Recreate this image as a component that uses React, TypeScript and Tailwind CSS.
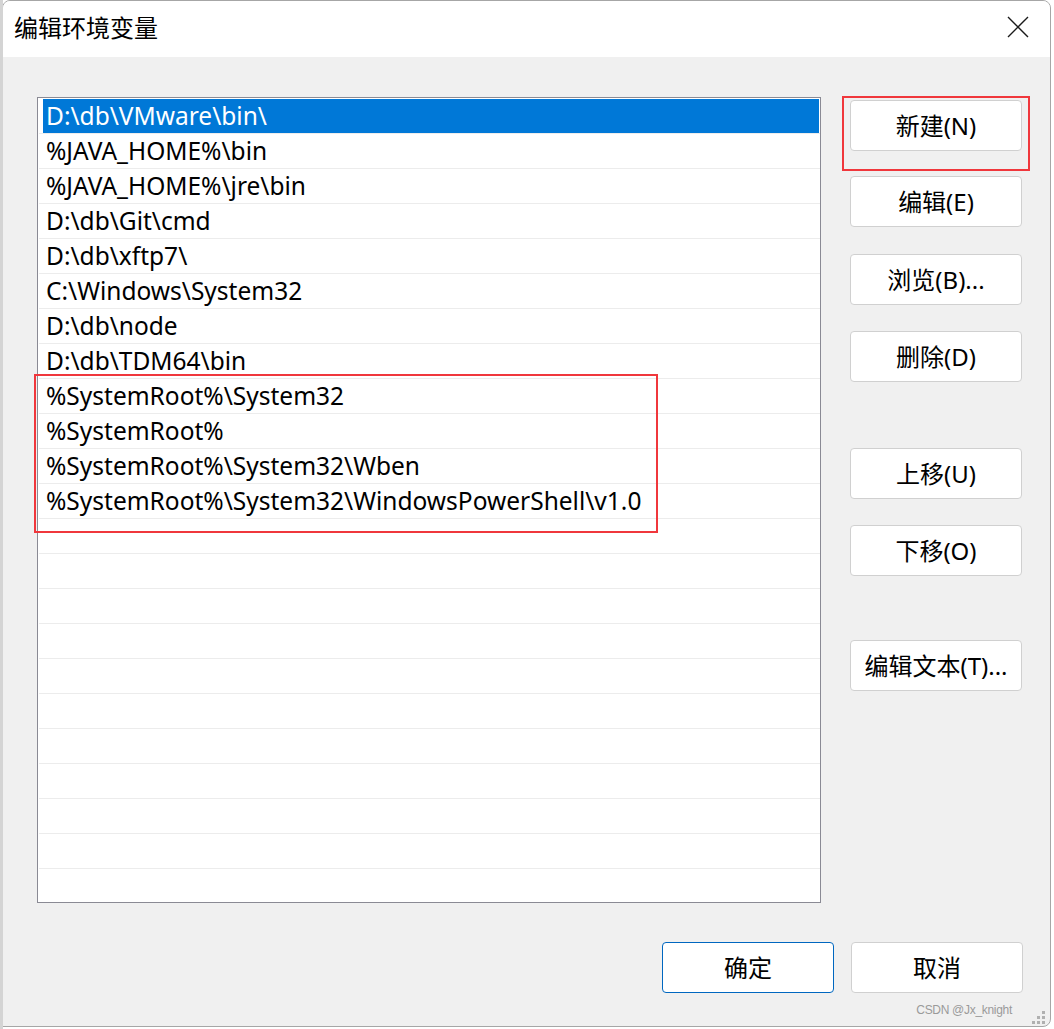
import React from "react";

const rows = [
  "D:\\db\\VMware\\bin\\",
  "%JAVA_HOME%\\bin",
  "%JAVA_HOME%\\jre\\bin",
  "D:\\db\\Git\\cmd",
  "D:\\db\\xftp7\\",
  "C:\\Windows\\System32",
  "D:\\db\\node",
  "D:\\db\\TDM64\\bin",
  "%SystemRoot%\\System32",
  "%SystemRoot%",
  "%SystemRoot%\\System32\\Wben",
  "%SystemRoot%\\System32\\WindowsPowerShell\\v1.0",
];

const font = { fontFamily: '"Noto Sans", "Noto Sans CJK SC", sans-serif' };

function DialogButton({
  label,
  primary,
  className = "",
}: {
  label: string;
  primary?: boolean;
  className?: string;
}) {
  return (
    <div
      className={
        "w-[172px] h-[51px] flex items-center justify-center bg-white rounded-[4px] border text-[24px] text-black " +
        (primary ? "border-[#0067c0] " : "border-[#d0d0d0] ") +
        className
      }
    >
      {label}
    </div>
  );
}

function PathList() {
  const all = [...rows, ...Array(11).fill("")];
  return (
    <div className="w-[784px] h-[806px] border border-[#8a8a94] bg-white pt-[1px] pl-[1px] overflow-hidden">
      {all.map((text, i) => (
        <div
          key={i}
          className="h-[35px] border-b border-[#ececec] flex items-stretch"
        >
          {i === 0 ? (
            <div className="ml-[4px] w-[776px] bg-[#0078d7] text-white flex items-center pl-[3px] text-[24.5px]">
              {text}
            </div>
          ) : (
            <div className="flex items-center pl-[7px] text-[24.5px] text-black">
              {text}
            </div>
          )}
        </div>
      ))}
    </div>
  );
}

function CloseIcon() {
  return (
    <svg width="24" height="24" viewBox="0 0 24 24">
      <path d="M2 2 L22 22 M22 2 L2 22" stroke="#1a1a1a" strokeWidth="1.4" />
    </svg>
  );
}

export default function App() {
  return (
    <div className="w-[1054px] h-[1029px] bg-white relative overflow-hidden" style={font}>
      <div className="absolute left-0 top-0 w-[3px] h-full bg-[#d4d4d4]" />
      <div className="ml-[2px] w-[1049px] h-[1027px] border border-[#a6a6a6] rounded-t-[8px] rounded-br-[8px] overflow-hidden flex flex-col bg-[#f0f0f0]">
        <div className="h-[56px] bg-white flex items-center justify-between pl-[11px] pr-[20px] shrink-0">
          <span className="text-[24px] text-black pb-[3px]">编辑环境变量</span>
          <div className="pb-[4px]">
            <CloseIcon />
          </div>
        </div>
        <div className="flex pl-[34px] pt-[40px]">
          <PathList />
          <div className="flex flex-col ml-[29px] pt-[3px]">
            <DialogButton label="新建(N)" />
            <DialogButton label="编辑(E)" className="mt-[25px]" />
            <DialogButton label="浏览(B)..." className="mt-[27px]" />
            <DialogButton label="删除(D)" className="mt-[26px]" />
            <DialogButton label="上移(U)" className="mt-[66px]" />
            <DialogButton label="下移(O)" className="mt-[26px]" />
            <DialogButton label="编辑文本(T)..." className="mt-[64px]" />
          </div>
        </div>
        <div className="flex justify-end gap-[17px] pr-[27px] mt-[39px]">
          <DialogButton label="确定" primary />
          <DialogButton label="取消" />
        </div>
        <div className="flex justify-end pr-[38px] mt-[8px]">
          <span
            className="text-[12px] tracking-[-0.3px] text-[#9a9a9a]"
            style={{ fontFamily: '"Liberation Sans", sans-serif' }}
          >
            CSDN @Jx_knight
          </span>
        </div>
      </div>
      <div className="absolute right-[9px] bottom-[5px] grid grid-cols-3 gap-[2px]">
        {[0, 0, 1, 0, 1, 1, 1, 1, 1].map((v, i) => (
          <div key={i} className={"w-[3px] h-[3px] " + (v ? "bg-[#b0b0b0]" : "bg-transparent")} />
        ))}
      </div>
      <div className="absolute left-[842px] top-[96px] w-[188px] h-[75px] border-2 border-[#f0373c]" />
      <div className="absolute left-[34px] top-[374px] w-[624px] h-[159px] border-2 border-[#f0373c]" />
    </div>
  );
}
